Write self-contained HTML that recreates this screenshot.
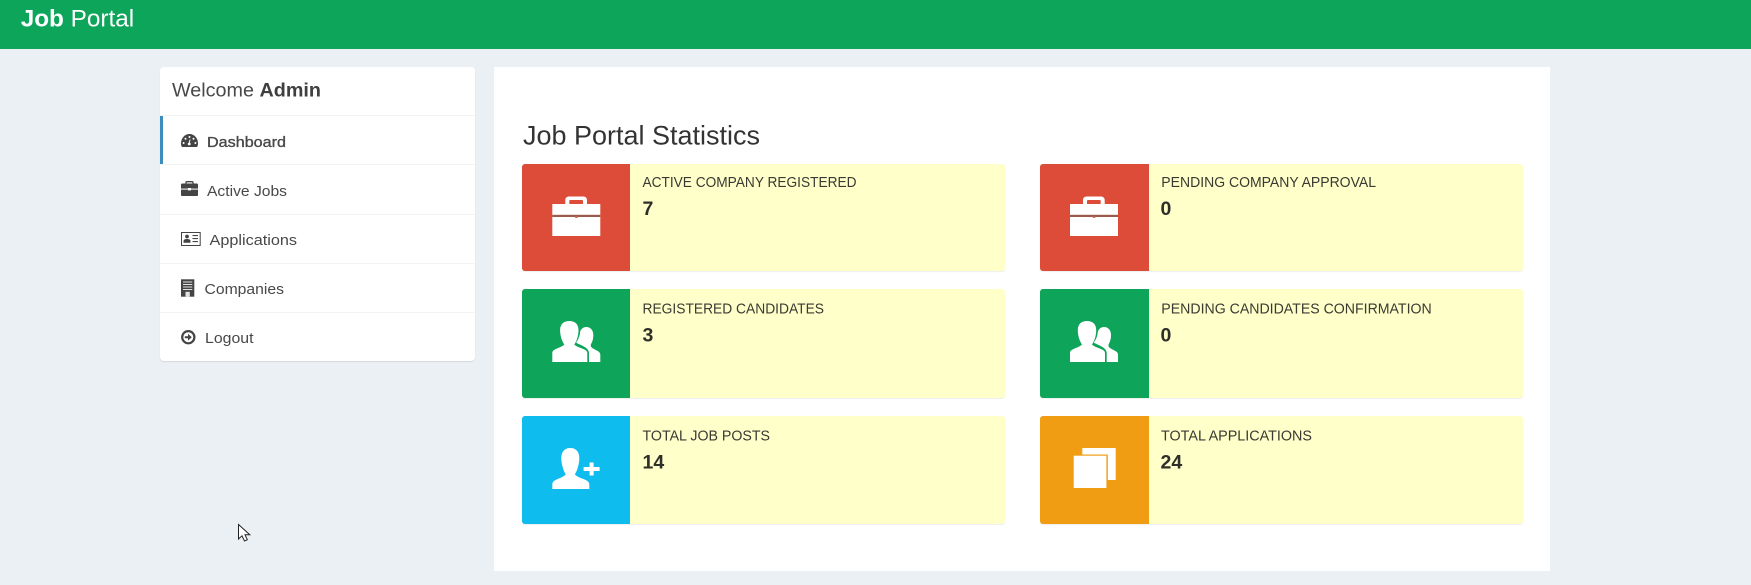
<!DOCTYPE html>
<html lang="en">
<head>
<meta charset="utf-8">
<title>Job Portal</title>
<style>
html,body{margin:0;padding:0;width:1751px;height:585px;overflow:hidden;background:#ebf0f4;font-family:"Liberation Sans",sans-serif}
header{position:absolute;left:0;top:0;width:1751px;height:49px;background:#0ca55a}
.side{position:absolute;left:160px;top:67px;width:315px;height:294px;background:#fff;border-radius:4px;box-shadow:0 1px 1px rgba(0,0,0,.1)}
.sep{position:absolute;left:0;width:315px;height:1px;background:#f2f3f5}
.act{position:absolute;left:0;top:49px;width:3px;height:48px;background:#3c8dbc}
.main{position:absolute;left:494px;top:67px;width:1056px;height:504px;background:#fff}
.card{position:absolute;width:483px;background:#ffffca;border-radius:3px;box-shadow:0 1px 1px rgba(0,0,0,.07);overflow:hidden}
.card i{display:block;position:absolute;left:0;top:0;bottom:0;width:108px}
.red{background:#dd4b39}.green{background:#0ea45a}.aqua{background:#0ebcee}.orange{background:#f09d14}
svg.top{position:absolute;left:0;top:0}
text{font-family:"Liberation Sans",sans-serif}
.lab{font-size:15.2px;fill:#3a3a32}
.num{font-size:19.5px;font-weight:700;fill:#2f2f2a}
.nav{font-size:15px;fill:#484848}
</style>
</head>
<body>
<header></header>
<div class="side">
  <div class="sep" style="top:48px"></div>
  <div class="sep" style="top:97px"></div>
  <div class="sep" style="top:147px"></div>
  <div class="sep" style="top:196px"></div>
  <div class="sep" style="top:245px"></div>
  <div class="act"></div>
</div>
<div class="main"></div>
<div class="card" style="left:522px;top:164px;height:107px"><i class="red"></i></div>
<div class="card" style="left:1040px;top:164px;height:107px"><i class="red" style="width:109px"></i></div>
<div class="card" style="left:522px;top:289px;height:109px"><i class="green"></i></div>
<div class="card" style="left:1040px;top:289px;height:109px"><i class="green" style="width:109px"></i></div>
<div class="card" style="left:522px;top:416px;height:108px"><i class="aqua"></i></div>
<div class="card" style="left:1040px;top:416px;height:108px"><i class="orange" style="width:109px"></i></div>

<svg class="top" width="1751" height="585" viewBox="0 0 1751 585" xmlns="http://www.w3.org/2000/svg">
<defs>
  <g id="case">
    <path fill="#fff" fill-rule="evenodd" d="M13 9V4C13 1.700 14.700 .5 17 .5H30.700C33 .5 34.700 1.700 34.700 4V9ZM17 9H30.700V5C30.700 4.400 30.300 4 29.700 4H18C17.400 4 17 4.400 17 5Z"/>
    <rect x="0" y="8" width="48" height="32" fill="#fff"/>
    <rect x="0" y="18.800" width="48" height="2.200" fill="#9b5a4c"/>
    <rect x="22.800" y="20.500" width="2.600" height="1.500" fill="#dd6b5c"/>
  </g>
  <g id="users" fill="#fff">
    <path d="M0 41V32C0 27.500 8 27.500 12 23.500C9.500 20 7.800 14.500 7.800 9C7.800 3 11.500 0 17 0C22.500 0 26.200 3 26.200 9C26.200 14.500 24.500 20 22 23.500C26 27.500 35 27.500 35 32V41Z"/>
    <path d="M36.700 41H48V33.500C48 29.500 41 29 38.500 25.500V23.500C40 21 41 18 41 14C41 9 38 6 34 6C31 6 28.500 8 27.800 11C27.500 15 26 19 23.800 21.300C24.800 23.500 36.700 25.500 36.700 32Z"/>
  </g>
  <g id="uadd" fill="#fff">
    <path d="M0 41V36.500C0 31 9 31 13.500 26.500C11 22.500 9 16 9 10C9 3.500 12.500 0 18 0C23.500 0 27 3.500 27 10C27 16 25 22.500 22.500 26.500C27 31 37 31 37 36.500V41Z"/>
    <rect x="31.300" y="19" width="16" height="4"/>
    <rect x="37.300" y="14.500" width="4" height="13"/>
  </g>
</defs>

<!-- header -->
<text x="20.700" y="26.500" font-size="24.300" fill="#fff"><tspan font-weight="700">Job</tspan> Portal</text>

<!-- sidebar text -->
<text x="172" y="96.700" font-size="19" fill="#484848" textLength="82" lengthAdjust="spacingAndGlyphs">Welcome</text>
<text x="259.500" y="96.700" font-size="19" font-weight="700" fill="#3f3f3f" textLength="61.500" lengthAdjust="spacingAndGlyphs">Admin</text>
<text class="nav" x="207" y="147" textLength="79" lengthAdjust="spacingAndGlyphs" stroke="#484848" stroke-width=".35">Dashboard</text>
<text class="nav" x="207" y="196" textLength="80" lengthAdjust="spacingAndGlyphs">Active Jobs</text>
<text class="nav" x="209.500" y="245" textLength="87.500" lengthAdjust="spacingAndGlyphs">Applications</text>
<text class="nav" x="204.500" y="294" textLength="79.500" lengthAdjust="spacingAndGlyphs">Companies</text>
<text class="nav" x="205" y="343" textLength="48.500" lengthAdjust="spacingAndGlyphs">Logout</text>

<!-- sidebar icons -->
<g fill="#444">
  <path d="M181 143.500C181 138 184.800 134 189.500 134S198 138 198 143.500C198 145 197.600 146.200 197 147H182C181.400 146.200 181 145 181 143.500Z"/>
  <g fill="#fff">
    <circle cx="183.600" cy="143" r="1"/><circle cx="185.500" cy="138.800" r="1"/>
    <circle cx="189.500" cy="137" r="1"/><circle cx="193.500" cy="138.800" r="1"/>
    <circle cx="195.400" cy="143" r="1"/><circle cx="189.200" cy="144" r="1.400"/>
    <rect x="189" y="139.500" width="1" height="4.500" transform="rotate(12 189.500 142)"/>
  </g>
  <path d="M186 184V182.700C186 182 186.500 181.700 187 181.700H192C192.500 181.700 193 182 193 182.700V184" fill="none" stroke="#444" stroke-width="1.300"/>
  <rect x="181" y="183.500" width="17" height="12.500" rx="1.300"/>
  <rect x="181" y="188.600" width="17" height="1" fill="#fff"/>
  <rect x="188" y="188" width="3" height="2.400" fill="#fff"/>
  <rect x="181.500" y="232.500" width="18.700" height="13" fill="none" stroke="#444" stroke-width="1"/>
  <circle cx="187" cy="236.500" r="1.900"/>
  <path d="M183.500 242.800V241C183.500 239.700 185 239 187 239S190.500 239.700 190.500 241V242.800Z"/>
  <rect x="192.500" y="235" width="5.500" height="1.100"/>
  <rect x="192.500" y="238" width="5.500" height="1.100"/>
  <rect x="192.500" y="241" width="5.500" height="1.100"/>
  <rect x="181" y="279.300" width="13.300" height="17.400"/>
  <g fill="#fff" fill-opacity=".85">
    <rect x="183" y="281.500" width="9.300" height="1"/>
    <rect x="183" y="284" width="9.300" height="1"/>
    <rect x="183" y="286.500" width="9.300" height="1"/>
    <rect x="183" y="289" width="9.300" height="1"/>
    <rect x="185.500" y="291.800" width="4.300" height="4.900"/>
  </g>
  <circle cx="188.300" cy="337.200" r="6.100" fill="none" stroke="#444" stroke-width="2.200"/>
  <path d="M184.800 336.200H188V333.800L191.800 337.200L188 340.600V338.200H184.800Z"/>
</g>

<!-- heading -->
<text x="523" y="144.700" font-size="26.500" fill="#333" textLength="237" lengthAdjust="spacingAndGlyphs">Job Portal Statistics</text>

<!-- card labels -->
<text class="lab" x="642.500" y="187" textLength="214" lengthAdjust="spacingAndGlyphs">ACTIVE COMPANY REGISTERED</text>
<text class="num" x="642.500" y="215">7</text>
<text class="lab" x="1161.300" y="187" textLength="214.700" lengthAdjust="spacingAndGlyphs">PENDING COMPANY APPROVAL</text>
<text class="num" x="1160.500" y="215">0</text>
<text class="lab" x="642.500" y="313.700" textLength="181.500" lengthAdjust="spacingAndGlyphs">REGISTERED CANDIDATES</text>
<text class="num" x="642.500" y="341.700">3</text>
<text class="lab" x="1161.300" y="313.700" textLength="270.400" lengthAdjust="spacingAndGlyphs">PENDING CANDIDATES CONFIRMATION</text>
<text class="num" x="1160.500" y="341.700">0</text>
<text class="lab" x="642.500" y="440.300" textLength="127.500" lengthAdjust="spacingAndGlyphs">TOTAL JOB POSTS</text>
<text class="num" x="642.500" y="468.700">14</text>
<text class="lab" x="1161" y="440.300" textLength="151" lengthAdjust="spacingAndGlyphs">TOTAL APPLICATIONS</text>
<text class="num" x="1160.500" y="468.700">24</text>

<!-- card icons -->
<use href="#case" x="552.300" y="196"/>
<use href="#case" x="1070" y="196"/>
<use href="#users" x="552.300" y="321"/>
<use href="#users" x="1070" y="321"/>
<use href="#uadd" x="552.300" y="448"/>
<rect x="1082.300" y="448" width="33.400" height="32" fill="#fff"/>
<rect x="1072.500" y="454.500" width="35.300" height="34.500" fill="#f09d14"/>
<rect x="1073.700" y="455.700" width="32.700" height="32.300" fill="#fff"/>

<!-- mouse cursor -->
<path d="M238.500 524.500V539L242 535.800L244.500 541L247.300 539.800L245 534.800H249.800Z" fill="#fff" stroke="#222" stroke-width="1"/>
</svg>
</body>
</html>
